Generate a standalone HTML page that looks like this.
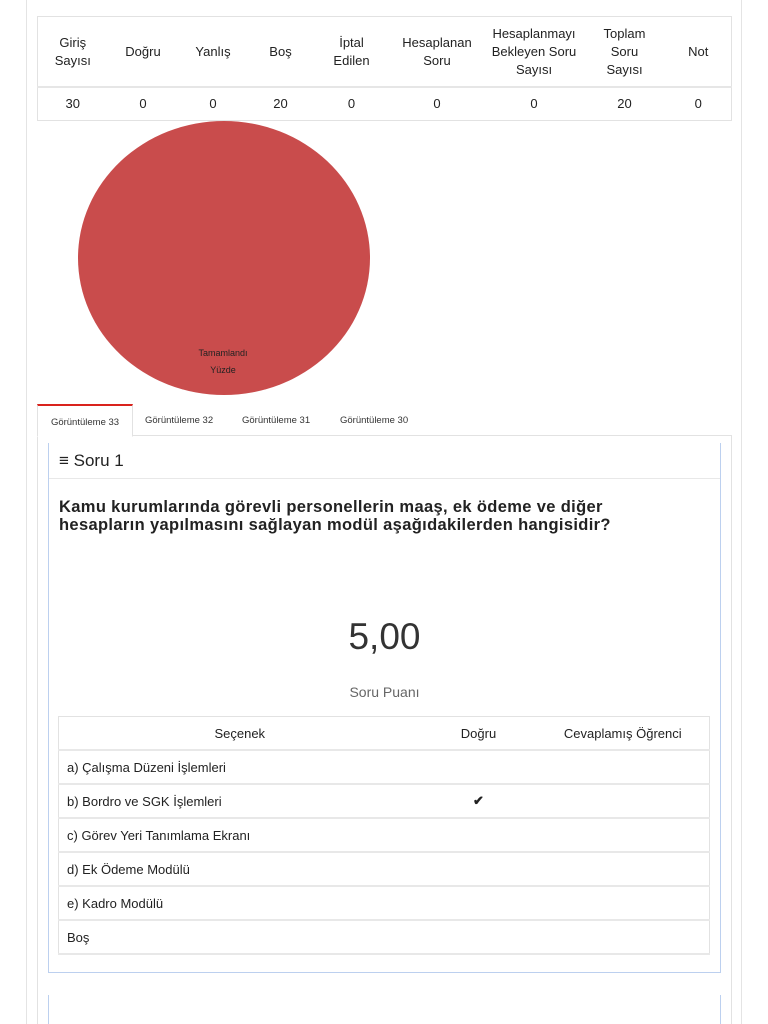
<!DOCTYPE html>
<html><head><meta charset="utf-8"><style>
html,body{margin:0;width:768px;height:1024px;overflow:hidden}
body{background:#fff;font-family:"Liberation Sans",sans-serif;color:#222;position:relative}
.vl{position:absolute;top:0;bottom:0;width:1px;background:#e4e4e4}
table{border-collapse:collapse;table-layout:fixed}
#t1{position:absolute;left:37px;top:16px;width:694px;font-size:13px;text-align:center;border:1px solid #e2e2e2}
#t1 td{padding:0 1px;line-height:18px}
#t1 tr:first-child td{height:69px;border-bottom:2px solid #e6e6e6}
#t1 tr:last-child td{height:32px}
.tabs{position:absolute;top:404px;left:37px;font-size:9.5px;color:#333}
.tab{position:absolute;top:0;height:30px;line-height:33px;white-space:nowrap}
.panel{position:absolute;left:48px;top:443px;width:671px;height:529px;border:1px solid #bcd0ef;border-top:none}
#t2{position:absolute;left:9px;top:273px;width:652px;font-size:13px;border:1px solid #e2e2e2}
#t2 td{height:32px;border-bottom:2px solid #e8e8e8;padding:0 8px}
</style></head><body>
<div class="vl" style="left:26px"></div><div class="vl" style="left:741px"></div>
<table id="t1"><colgroup><col style="width:70px"><col style="width:71px"><col style="width:69px"><col style="width:66px"><col style="width:76px"><col style="width:95px"><col style="width:99px"><col style="width:82px"><col style="width:66px"></colgroup>
<tr><td>Giriş<br>Sayısı</td><td>Doğru</td><td>Yanlış</td><td>Boş</td><td>İptal<br>Edilen</td><td>Hesaplanan<br>Soru</td><td>Hesaplanmayı<br>Bekleyen Soru<br>Sayısı</td><td>Toplam<br>Soru<br>Sayısı</td><td>Not</td></tr>
<tr><td>30</td><td>0</td><td>0</td><td>20</td><td>0</td><td>0</td><td>0</td><td>20</td><td>0</td></tr></table>
<svg style="position:absolute;left:0;top:0" width="768" height="400"><ellipse cx="224" cy="258" rx="146" ry="137" fill="#c94c4c"/>
<text x="223" y="356" font-size="9" text-anchor="middle" fill="#222" font-family="Liberation Sans">Tamamlandı</text>
<text x="223" y="373" font-size="9" text-anchor="middle" fill="#222" font-family="Liberation Sans">Yüzde</text></svg>
<div style="position:absolute;left:37px;top:435px;width:693px;height:600px;border:1px solid #e2e2e2"></div>
<div class="tabs">
<div class="tab" style="left:0;width:94px;border:1px solid #e2e2e2;border-top:2px solid #d9231d;border-bottom:1px solid #fff;background:#fff;text-align:center;z-index:2">Görüntüleme 33</div>
<div class="tab" style="left:108px">Görüntüleme 32</div>
<div class="tab" style="left:205px">Görüntüleme 31</div>
<div class="tab" style="left:303px">Görüntüleme 30</div>
</div>
<div class="panel">
<div style="position:absolute;left:10px;top:8px;font-size:17px">≡ Soru 1</div>
<div style="position:absolute;left:0;right:0;top:35px;border-top:1px solid #e8e8e8"></div>
<div style="position:absolute;left:10px;top:55px;font-size:16.5px;font-weight:bold;line-height:18px;letter-spacing:0.35px">Kamu kurumlarında görevli personellerin maaş, ek ödeme ve diğer<br>hesapların yapılmasını sağlayan modül aşağıdakilerden hangisidir?</div>
<div style="position:absolute;left:0;right:0;top:173px;text-align:center;font-size:37px;color:#333">5,00</div>
<div style="position:absolute;left:0;right:0;top:241px;text-align:center;font-size:14px;color:#666">Soru Puanı</div>
<table id="t2"><colgroup><col style="width:362px"><col style="width:116px"><col></colgroup>
<tr><td style="text-align:center">Seçenek</td><td style="text-align:center">Doğru</td><td style="text-align:center">Cevaplamış Öğrenci</td></tr>
<tr><td>a) Çalışma Düzeni İşlemleri</td><td></td><td></td></tr>
<tr><td>b) Bordro ve SGK İşlemleri</td><td style="text-align:center;font-weight:bold">✔</td><td></td></tr>
<tr><td>c) Görev Yeri Tanımlama Ekranı</td><td></td><td></td></tr>
<tr><td>d) Ek Ödeme Modülü</td><td></td><td></td></tr>
<tr><td>e) Kadro Modülü</td><td></td><td></td></tr>
<tr><td>Boş</td><td></td><td></td></tr>
</table>
</div>
<div style="position:absolute;left:48px;top:995px;width:671px;height:40px;border-left:1px solid #bcd0ef;border-right:1px solid #bcd0ef"></div>
</body></html>
